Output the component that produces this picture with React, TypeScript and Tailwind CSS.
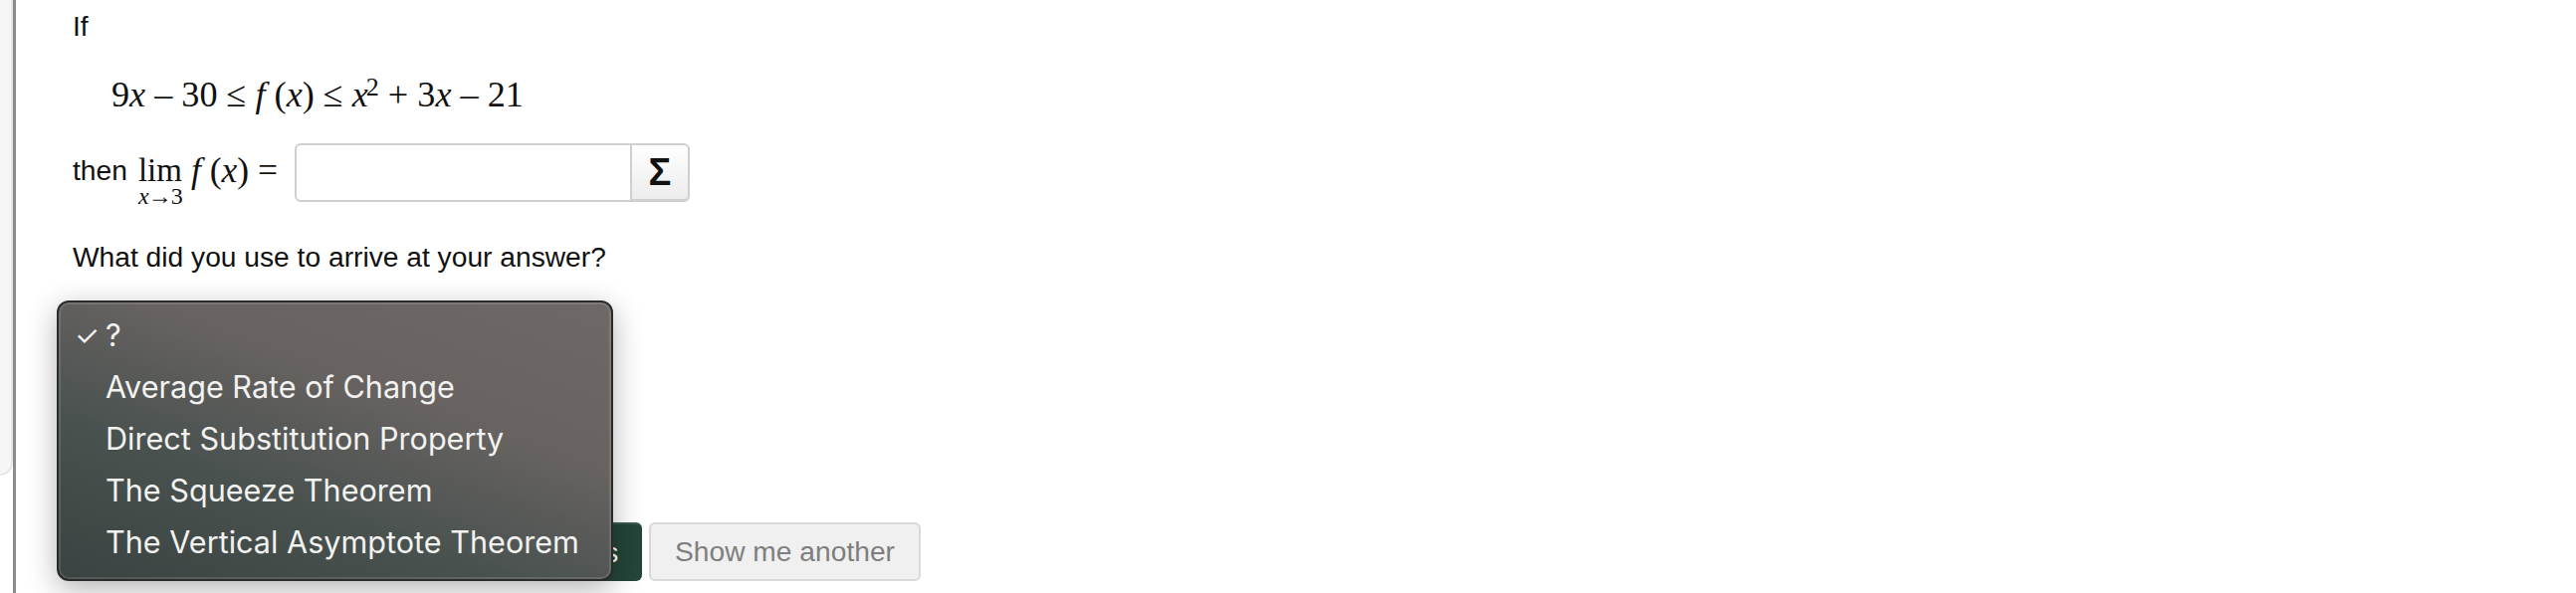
import React from 'react'

const options = ['?', 'Average Rate of Change', 'Direct Substitution Property', 'The Squeeze Theorem', 'The Vertical Asymptote Theorem']

function Var({ children }: { children: React.ReactNode }) {
  return <i className="italic">{children}</i>
}

export default function App() {
  return (
    <div className="relative flex h-[596px] w-[2588px] overflow-hidden bg-white font-['Liberation_Sans',Arial,sans-serif] text-[28.2px] text-[#111]">
      {/* left rail */}
      <div className="w-[16px] shrink-0 border-r-[3px] border-[#8c8c8c]">
        <div className="h-[478px] w-[13px] rounded-br-[16px] border-r-2 border-b-2 border-[#e6e6e6] bg-[#f6f6f6]" />
      </div>

      <div className="flex flex-1 flex-col pl-[57px]">
        <div className="mt-[8px] h-[36px] leading-[36px]">If</div>

        <div className="ml-[39px] mt-[29px] h-[44px] font-['Liberation_Serif',serif] text-[36.2px] leading-[44px] whitespace-pre">
          9<Var>x</Var> – 30 ≤ <Var>f</Var> (<Var>x</Var>) ≤ <Var>x</Var>
          <sup className="-ml-[2px] -top-[11px] text-[26px] leading-none">2</sup> + 3<Var>x</Var> – 21
        </div>

        <div className="mt-[27px] flex h-[59px] items-center">
          <span className="-translate-y-[2px]">then</span>
          <span className="ml-[11px] flex -translate-y-[5px] flex-col items-center font-['Liberation_Serif',serif]">
            <span className="text-[33px] leading-[36px]">lim</span>
            <span className="-mt-[4px] h-0 text-[24px] leading-[24px] tracking-[-1px] whitespace-nowrap"><Var>x</Var>→3</span>
          </span>
          <span className="ml-[9px] -translate-y-[2px] font-['Liberation_Serif',serif] text-[35.5px] whitespace-pre">
            <Var>f</Var> (<Var>x</Var>) =
          </span>
          <div className="ml-[17px] h-[59px] w-[339px] rounded-l-[6px] border-2 border-[#cfcfcf] bg-white" />
          <div className="flex h-[59px] w-[58px] items-center justify-center rounded-r-[6px] border-2 border-l-0 border-[#cfcfcf] border-b-[3px] bg-gradient-to-b from-white to-[#ececec] text-[38px] font-bold">
            Σ
          </div>
        </div>

        <div className="mt-[37px] h-[36px] leading-[36px]">What did you use to arrive at your answer?</div>

        <div className="mt-[249px] flex gap-[7px] pl-[332px]">
          <button className="h-[59px] w-[240px] rounded-[6px] border-t-2 border-[#3b5a4f] bg-[#25453a] text-white">Check answers</button>
          <button className="h-[59px] w-[273px] rounded-[6px] border-2 border-[#d9d9d9] bg-[#f0f0f0] text-[#7e7e7e]">Show me another</button>
        </div>
      </div>

      {/* open select menu */}
      <div className="absolute left-[57px] top-[302px] h-[282px] w-[559px] rounded-[12px] border-2 border-[#2b2b2b] bg-[linear-gradient(200deg,#6e6966_0%,#686361_35%,#4a5250_65%,#3a4341_100%)] pt-[7px] font-['Inter',sans-serif] text-[#f2f2f0] shadow-[0_8px_30px_rgba(0,0,0,0.3),inset_0_0_0_2px_rgba(255,255,255,0.12)]">
        {options.map((o, i) => (
          <div key={o} className="relative flex h-[52px] items-center pl-[47px] text-[30.6px] leading-none whitespace-nowrap">
            {i === 0 && <span className="absolute left-[16px] text-[28px]">✓</span>}
            {o}
          </div>
        ))}
      </div>
    </div>
  )
}
